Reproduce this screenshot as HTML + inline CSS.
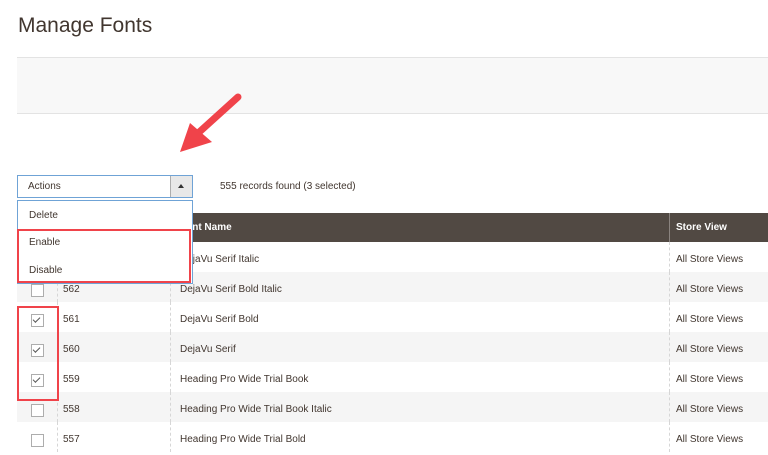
<!DOCTYPE html>
<html><head><style>
body{margin:0;width:768px;height:444px;overflow:hidden;background:#fff;font-family:"Liberation Sans",sans-serif;color:#41362f;position:relative}
.a{position:absolute}
h1{position:absolute;left:18px;top:14px;margin:0;font-weight:normal;font-size:21px;color:#41362f}
.row{position:absolute;left:17px;width:751px;height:30px;font-size:10px;line-height:30px}
.row span{position:absolute;top:3px}
.cb{position:absolute;left:14px;top:12px;width:11px;height:11px;border:1px solid #adadad;background:#fff}
.ck{position:absolute;left:16px;top:15px;width:6px;height:3px;border-left:1.3px solid #555;border-bottom:1.3px solid #555;transform:rotate(-45deg)}
.vl{position:absolute;top:0;bottom:0;border-left:1px dashed #d6d6d6}
</style></head><body>
<h1>Manage Fonts</h1>
<div class="a" style="left:17px;top:57px;width:751px;height:55px;background:#f8f8f8;border-top:1px solid #e3e3e3;border-bottom:1px solid #e3e3e3"></div>
<svg class="a" style="left:170px;top:85px" width="80" height="70"><line x1="68" y1="12" x2="26" y2="50" stroke="#f0434a" stroke-width="7" stroke-linecap="round"/><polygon points="10,67 20,38 42,57" fill="#f0434a"/></svg>
<div class="a" style="left:17px;top:175px;width:174px;height:21px;border:1px solid #6fa3d6"></div>
<div class="a" style="left:28px;top:181px;font-size:10px">Actions</div>
<div class="a" style="left:170px;top:176px;width:21px;height:21px;background:#e8e8e8;border-left:1px solid #adadad"></div>
<div class="a" style="left:178px;top:184px;width:0;height:0;border-left:3px solid transparent;border-right:3px solid transparent;border-bottom:4px solid #333"></div>
<div class="a" style="left:220px;top:181px;font-size:10px">555 records found (3 selected)</div>
<div class="a" style="left:17px;top:213px;width:751px;height:29px;background:#514943;color:#fff;font-size:10px;font-weight:bold;line-height:29px"><span class="a" style="left:163px;top:0">Font Name</span><span class="a" style="left:659px;top:0">Store View</span><div class="a" style="left:652px;top:0;bottom:0;border-left:1px solid #8a837f"></div></div>
<div class="row" style="top:242px;background:#fff"><div class="cb"></div><span style="left:46px">563</span><span style="left:163px">DejaVu Serif Italic</span><span style="left:659px">All Store Views</span><div class="vl" style="left:40px"></div><div class="vl" style="left:153px"></div><div class="vl" style="left:652px"></div></div>
<div class="row" style="top:272px;background:#f5f5f5"><div class="cb"></div><span style="left:46px">562</span><span style="left:163px">DejaVu Serif Bold Italic</span><span style="left:659px">All Store Views</span><div class="vl" style="left:40px"></div><div class="vl" style="left:153px"></div><div class="vl" style="left:652px"></div></div>
<div class="row" style="top:302px;background:#fff"><div class="cb"></div><div class="ck"></div><span style="left:46px">561</span><span style="left:163px">DejaVu Serif Bold</span><span style="left:659px">All Store Views</span><div class="vl" style="left:40px"></div><div class="vl" style="left:153px"></div><div class="vl" style="left:652px"></div></div>
<div class="row" style="top:332px;background:#f5f5f5"><div class="cb"></div><div class="ck"></div><span style="left:46px">560</span><span style="left:163px">DejaVu Serif</span><span style="left:659px">All Store Views</span><div class="vl" style="left:40px"></div><div class="vl" style="left:153px"></div><div class="vl" style="left:652px"></div></div>
<div class="row" style="top:362px;background:#fff"><div class="cb"></div><div class="ck"></div><span style="left:46px">559</span><span style="left:163px">Heading Pro Wide Trial Book</span><span style="left:659px">All Store Views</span><div class="vl" style="left:40px"></div><div class="vl" style="left:153px"></div><div class="vl" style="left:652px"></div></div>
<div class="row" style="top:392px;background:#f5f5f5"><div class="cb"></div><span style="left:46px">558</span><span style="left:163px">Heading Pro Wide Trial Book Italic</span><span style="left:659px">All Store Views</span><div class="vl" style="left:40px"></div><div class="vl" style="left:153px"></div><div class="vl" style="left:652px"></div></div>
<div class="row" style="top:422px;background:#fff"><div class="cb"></div><span style="left:46px">557</span><span style="left:163px">Heading Pro Wide Trial Bold</span><span style="left:659px">All Store Views</span><div class="vl" style="left:40px"></div><div class="vl" style="left:153px"></div><div class="vl" style="left:652px"></div></div>
<div class="a" style="left:17px;top:200px;width:174px;height:82px;background:#fff;border:1px solid #6fa3d6;font-size:10px"><div class="a" style="left:11px;top:9px">Delete</div><div class="a" style="left:11px;top:36px">Enable</div><div class="a" style="left:11px;top:64px">Disable</div></div>
<div class="a" style="left:17px;top:229px;width:170px;height:50px;border:2px solid #f0434a"></div>
<div class="a" style="left:17px;top:306px;width:38px;height:91px;border:2px solid #f0434a"></div>
</body></html>
